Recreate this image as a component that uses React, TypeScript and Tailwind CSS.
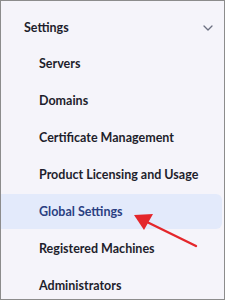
import React from "react";

const items = [
  "Servers",
  "Domains",
  "Certificate Management",
  "Product Licensing and Usage",
  "Global Settings",
  "Registered Machines",
  "Administrators",
];

export default function App() {
  return (
    <div
      className="relative w-[225px] h-[300px] border border-[#8c8c8c] bg-[#f5f4fa] overflow-hidden pt-[1px]"
      style={{ fontFamily: 'Lato, "Noto Sans", "Liberation Sans", sans-serif' }}
    >
      <div className="flex items-center justify-between h-[43px] pt-[9px] pl-[23px] pr-[11px]">
        <span className="text-[12.5px] font-bold text-[#1e1e2c]">Settings</span>
        <svg width="10" height="6" viewBox="0 0 10 6" fill="none">
          <path d="M1 1l4 4 4-4" stroke="#6b6f80" strokeWidth="1.3" strokeLinecap="round" strokeLinejoin="round" />
        </svg>
      </div>
      <div className="flex flex-col">
        {items.map((t) => {
          const active = t === "Global Settings";
          return (
            <div key={t} className="h-[37px] flex items-center">
              <div
                className={
                  active
                    ? "h-[35px] w-full mr-[2px] rounded-r-[6px] bg-[#e3eafb] flex items-center pl-[38px] pt-[1px]"
                    : "h-[35px] w-full flex items-center pl-[38px] pt-[1px]"
                }
              >
                <span
                  className={
                    active
                      ? "text-[12.5px] font-bold text-[#2a3f82]"
                      : "text-[12.5px] font-bold text-[#1e1e2c]"
                  }
                >
                  {t}
                </span>
              </div>
            </div>
          );
        })}
      </div>
      <svg className="absolute left-0 top-0" width="225" height="300" viewBox="0 0 225 300">
        <line x1="195" y1="245" x2="146" y2="221" stroke="#e4262b" strokeWidth="2.4" strokeLinecap="round" />
        <polygon points="133,214 152,213 143,229" fill="#e4262b" />
      </svg>
    </div>
  );
}
